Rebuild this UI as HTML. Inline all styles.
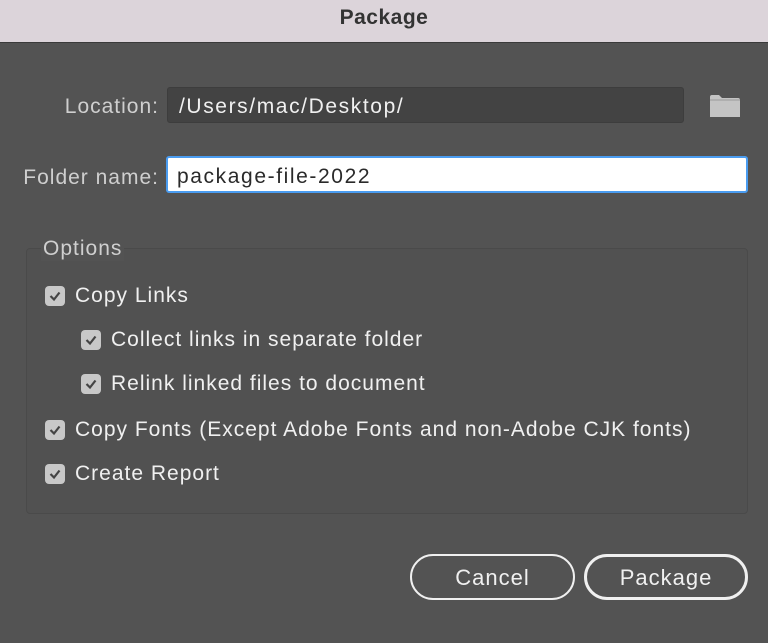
<!DOCTYPE html>
<html><head><style>
*{margin:0;padding:0;box-sizing:border-box}
body{width:768px;height:643px;background:#535353;font-family:"Liberation Sans",sans-serif;color:#f0f0f0;position:relative;overflow:hidden}
.t{position:absolute;white-space:nowrap;font-size:21px;line-height:24px;letter-spacing:1px}
.title{position:absolute;left:0;top:0;width:768px;height:43px;background:#dcd4da;border-bottom:1px solid #3a3a3a;color:#333;font-weight:bold;font-size:21px;text-align:center;line-height:35px;letter-spacing:.5px}
.lab{color:#cfcfcf}
.rl{position:absolute;right:609px;white-space:nowrap;font-size:21px;line-height:24px;letter-spacing:1px;color:#cfcfcf}
.box{position:absolute;left:26px;top:248px;width:722px;height:266px;border:1px solid #4a4a4a;border-radius:4px;background:#515151}
.cb{position:absolute;width:20px;height:20px;background:#c8c8c8;border-radius:4px}
.cb svg{position:absolute;left:2px;top:2px}
.btn{position:absolute;top:554px;height:46px;border:2px solid #f0f0f0;border-radius:23px;text-align:center;line-height:44px;font-size:22px;letter-spacing:1px}
</style></head><body>
<div class="title">Package</div>
<div class="rl" style="top:95px">Location:</div>
<div style="position:absolute;left:167px;top:87px;width:517px;height:36px;background:#434343;border:1px solid #3d3d3d;border-radius:3px"></div>
<div class="t" style="left:179px;top:95px;letter-spacing:1.6px">/Users/mac/Desktop/</div>
<svg style="position:absolute;left:710px;top:95px" width="30" height="22" viewBox="0 0 30 22"><path d="M0 2Q0 0 2 0H9L12 3H28Q30 3 30 5V22H0Z" fill="#c4c4c4"/><path d="M0 5H30" stroke="#9a9a9a" stroke-width="1"/></svg>
<div class="rl" style="top:166px">Folder name:</div>
<div style="position:absolute;left:166px;top:156px;width:582px;height:37px;background:#fff;border:2px solid #4a9cf0;border-radius:3px"></div>
<div class="t" style="left:177px;top:165px;color:#2a2a2a;letter-spacing:1.6px">package-file-2022</div>
<div class="box"></div>
<div class="t lab" style="left:41px;top:237px;background:#535353;padding:0 2px">Options</div>
<div class="cb" style="left:45px;top:286px"><svg width="16" height="16"><path d="M3.5 8L7 11.5L12.5 4.5" stroke="#444" stroke-width="2.2" fill="none"/></svg></div>
<div class="t" style="left:75px;top:284px">Copy Links</div>
<div class="cb" style="left:81px;top:330px"><svg width="16" height="16"><path d="M3.5 8L7 11.5L12.5 4.5" stroke="#444" stroke-width="2.2" fill="none"/></svg></div>
<div class="t" style="left:111px;top:328px">Collect links in separate folder</div>
<div class="cb" style="left:81px;top:374px"><svg width="16" height="16"><path d="M3.5 8L7 11.5L12.5 4.5" stroke="#444" stroke-width="2.2" fill="none"/></svg></div>
<div class="t" style="left:111px;top:372px">Relink linked files to document</div>
<div class="cb" style="left:45px;top:420px"><svg width="16" height="16"><path d="M3.5 8L7 11.5L12.5 4.5" stroke="#444" stroke-width="2.2" fill="none"/></svg></div>
<div class="t" style="left:75px;top:418px">Copy Fonts (Except Adobe Fonts and non-Adobe CJK fonts)</div>
<div class="cb" style="left:45px;top:464px"><svg width="16" height="16"><path d="M3.5 8L7 11.5L12.5 4.5" stroke="#444" stroke-width="2.2" fill="none"/></svg></div>
<div class="t" style="left:75px;top:462px">Create Report</div>
<div class="btn" style="left:410px;width:165px">Cancel</div>
<div class="btn" style="left:584px;width:164px;border-width:3px;line-height:42px">Package</div>
</body></html>
